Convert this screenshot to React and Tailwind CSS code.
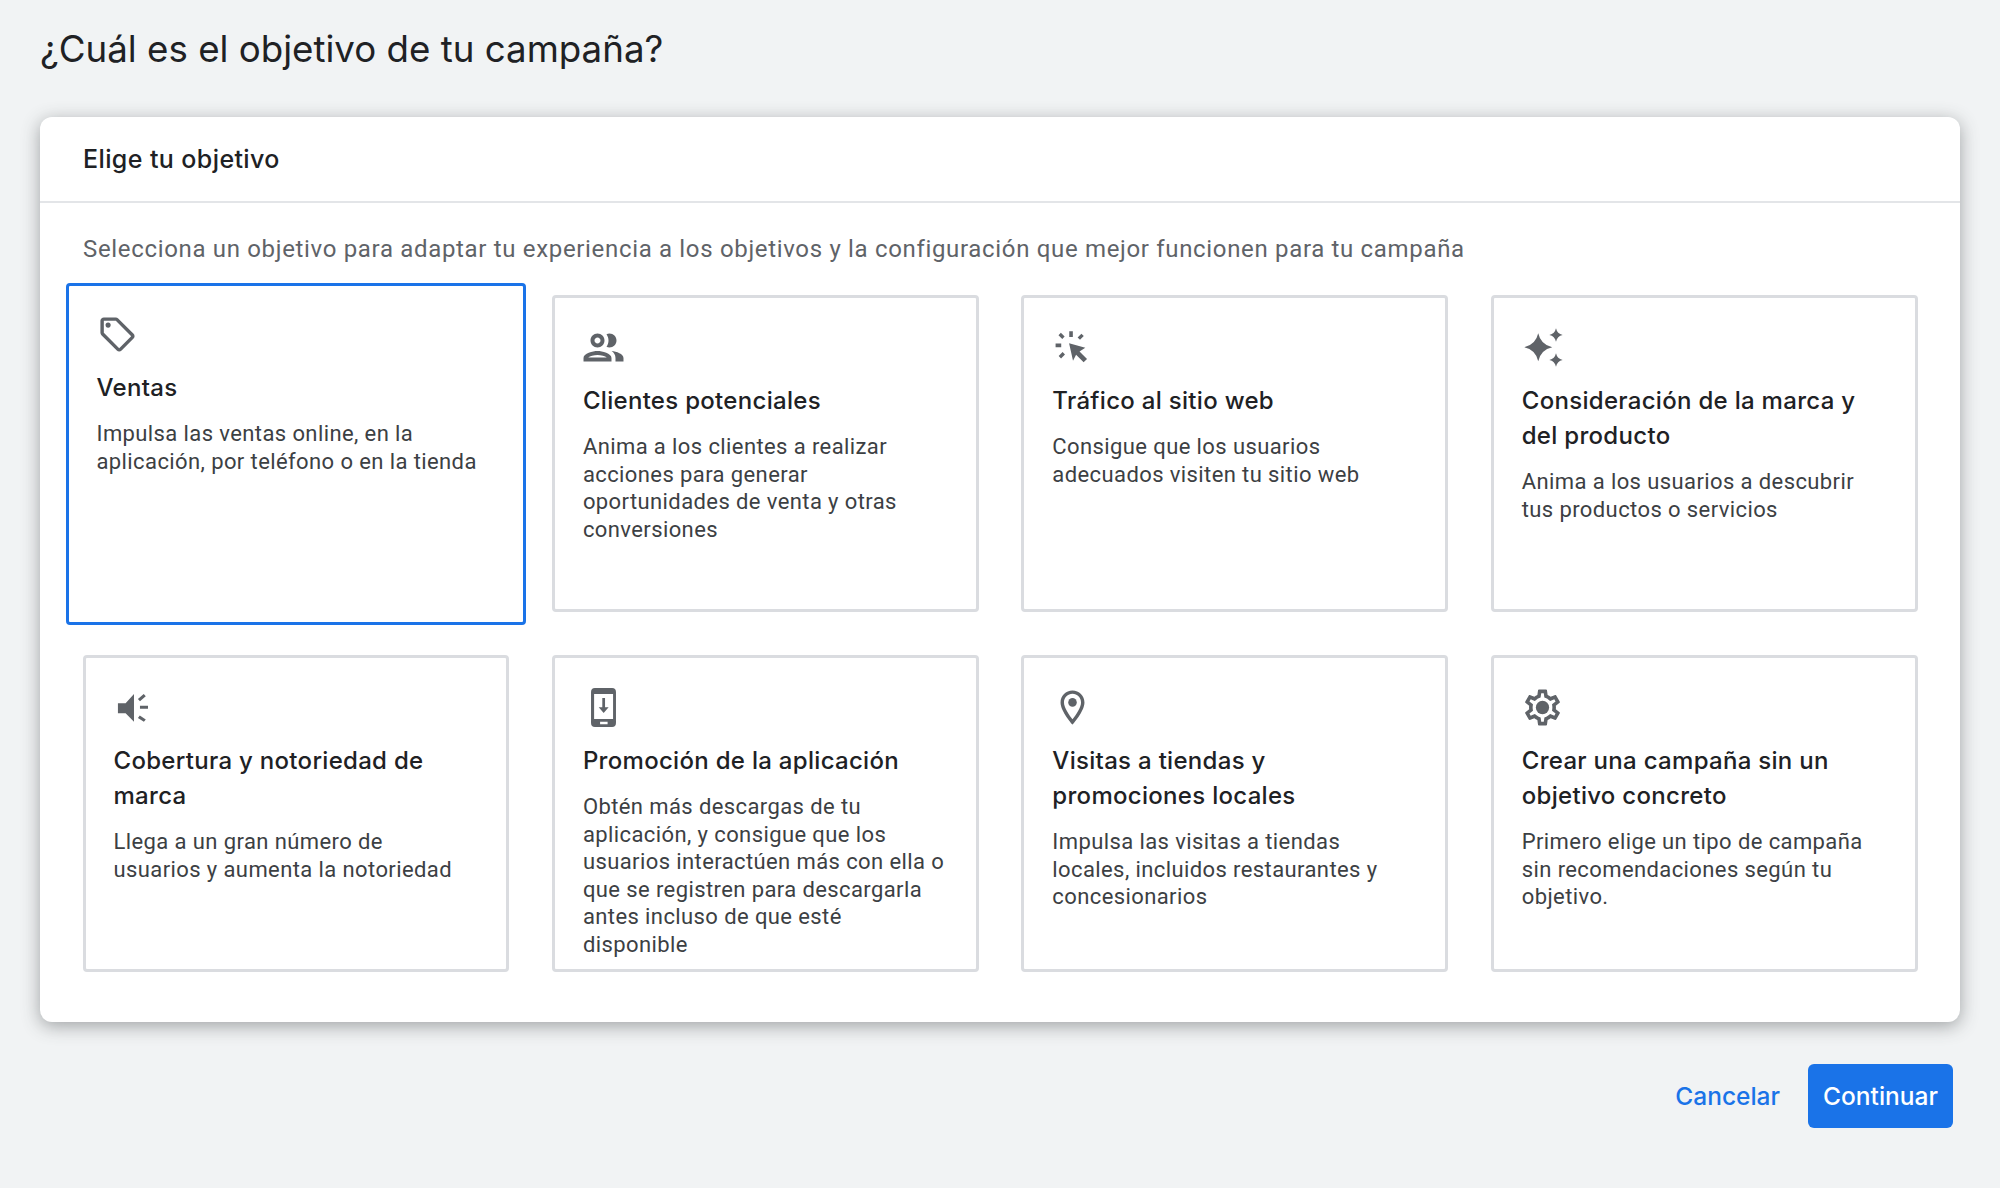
const Icon = ({ children }) => (
  <svg viewBox="0 0 24 24" className="w-[41px] h-[41px] fill-[#5f6368] block shrink-0">{children}</svg>
);

const star = (cx, cy, r) => {
  const k = 0.18 * r;
  return `M${cx} ${cy - r}Q${cx + k} ${cy - k} ${cx + r} ${cy}Q${cx + k} ${cy + k} ${cx} ${cy + r}Q${cx - k} ${cy + k} ${cx - r} ${cy}Q${cx - k} ${cy - k} ${cx} ${cy - r}Z`;
};

const icons = {
  tag: (
    <Icon>
      <path d="M21.41 11.58l-9-9C12.05 2.22 11.55 2 11 2H4c-1.1 0-2 .9-2 2v7c0 .55.22 1.05.59 1.42l9 9c.36.36.86.58 1.41.58s1.05-.22 1.41-.59l7-7c.37-.36.59-.86.59-1.41s-.23-1.06-.59-1.42zM13 20.01L4 11V4h7v-.01l9 9-7 7.02z" />
      <circle cx="6.5" cy="6.5" r="1.5" />
    </Icon>
  ),
  group: (
    <Icon>
      <g transform="translate(12 12) scale(1.17) translate(-12 -12)">
        <path d="M9 13.75c-2.34 0-7 1.17-7 3.5V19h14v-1.75c0-2.33-4.66-3.5-7-3.5zM4.34 17c.84-.58 2.87-1.25 4.66-1.25s3.82.67 4.66 1.25H4.34zM9 12c1.93 0 3.5-1.57 3.5-3.5S10.93 5 9 5 5.5 6.57 5.5 8.5 7.07 12 9 12zm0-5c.83 0 1.5.67 1.5 1.5S9.83 10 9 10s-1.5-.67-1.5-1.5S8.17 7 9 7zm7.04 6.81c1.16.84 1.96 1.96 1.96 3.44V19h4v-1.75c0-2.02-3.5-3.17-5.96-3.44zM15 12c1.93 0 3.5-1.57 3.5-3.5S16.93 5 15 5c-.54 0-1.04.13-1.5.35.63.89 1 1.98 1 3.15s-.37 2.26-1 3.15c.46.22.96.35 1.5.35z" />
      </g>
    </Icon>
  ),
  click: (
    <Icon>
      <path d="M10 9.5L19.5 12.2L16.1 14.3L20.5 18.7L18.5 20.7L14.1 16.3L12.3 19.7Z" />
      <path d="M10.1 2.5h2.1v3.4h-2.1zM2.1 9.7h3.3v2.1H2.1zM3.8 4.8l1.4-1.4 2.2 2.2L6 7zM15 6.1l2.2-2.2 1.4 1.4-2.2 2.2zM3.9 17l2.3-2.3 1.4 1.4-2.3 2.3z" />
    </Icon>
  ),
  sparkle: (
    <Icon>
      <path d={star(9.5, 11.9, 8.2)} />
      <path d={star(19.9, 4.7, 3.9)} />
      <path d={star(19.9, 19.3, 3.9)} />
    </Icon>
  ),
  megaphone: (
    <Icon>
      <path d="M2.3 9.5H6.8L11.7 4.1V20.3L6.8 15.4H2.3Z" />
      <path d="M15.2 11h4.7v1.8h-4.7zM14 7l3.4-2.9 1.2 1.3-3.4 2.9zM14 18.1l1.1-1.4 3.5 2.3-1.1 1.4z" />
    </Icon>
  ),
  phone: (
    <Icon>
      <path
        fillRule="evenodd"
        d="M7 .6h10a2.3 2.3 0 0 1 2.3 2.3v18.2a2.3 2.3 0 0 1-2.3 2.3H7a2.3 2.3 0 0 1-2.3-2.3V2.9A2.3 2.3 0 0 1 7 .6zM6.5 4.1v14.6h11.1V4.1zM10 20.3v1.5h4.4v-1.5z"
      />
      <path d="M11.3 6.4h1.6v5.4h2.1L12.1 15.2L9.2 11.8h2.1z" />
    </Icon>
  ),
  pin: (
    <Icon>
      <path d="M12 2C8.13 2 5 5.13 5 9c0 5.25 7 13 7 13s7-7.75 7-13c0-3.87-3.13-7-7-7zM7 9c0-2.76 2.24-5 5-5s5 2.24 5 5c0 2.88-2.88 7.19-5 9.88C9.92 16.21 7 11.85 7 9z" />
      <circle cx="12" cy="9" r="2.5" />
    </Icon>
  ),
  gear: (
    <Icon>
      <g transform="translate(12 12) scale(1.05) translate(-12 -12)">
        <path d="M19.43 12.98c.04-.32.07-.64.07-.98 0-.34-.03-.66-.07-.98l2.11-1.65c.19-.15.24-.42.12-.64l-2-3.46c-.09-.16-.26-.25-.44-.25-.06 0-.12.01-.17.03l-2.49 1c-.52-.4-1.08-.73-1.69-.98l-.38-2.65C14.46 2.18 14.25 2 14 2h-4c-.25 0-.46.18-.49.42l-.38 2.65c-.61.25-1.17.59-1.69.98l-2.49-1c-.06-.02-.12-.03-.18-.03-.17 0-.34.09-.43.25l-2 3.46c-.13.22-.07.49.12.64l2.11 1.65c-.04.32-.07.65-.07.98 0 .33.03.66.07.98l-2.11 1.65c-.19.15-.24.42-.12.64l2 3.46c.09.16.26.25.44.25.06 0 .12-.01.17-.03l2.49-1c.52.4 1.08.73 1.69.98l.38 2.65c.03.24.24.42.49.42h4c.25 0 .46-.18.49-.42l.38-2.65c.61-.25 1.17-.59 1.69-.98l2.49 1c.06.02.12.03.18.03.17 0 .34-.09.43-.25l2-3.46c.12-.22.07-.49-.12-.64l-2.11-1.65zm-1.98-1.71c.04.31.05.52.05.73 0 .21-.02.43-.05.73l-.14 1.13.89.7 1.08.84-.7 1.21-1.27-.51-1.04-.42-.9.68c-.43.32-.84.56-1.25.73l-1.06.43-.16 1.13-.2 1.35h-1.4l-.19-1.35-.16-1.13-1.06-.43c-.43-.18-.83-.41-1.23-.71l-.91-.7-1.06.43-1.27.51-.7-1.21 1.08-.84.89-.7-.14-1.13c-.03-.31-.05-.54-.05-.74s.02-.43.05-.73l.14-1.13-.89-.7-1.08-.84.7-1.21 1.27.51 1.04.42.9-.68c.43-.32.84-.56 1.25-.73l1.06-.43.16-1.13.2-1.35h1.39l.19 1.35.16 1.13 1.06.43c.43.18.83.41 1.23.71l.91.7 1.06-.43 1.27-.51.7 1.21-1.07.85-.89.7.14 1.13z" />
        <circle cx="12" cy="12" r="3.7" />
      </g>
    </Icon>
  ),
};

const cards = [
  { icon: "tag", title: "Ventas", desc: "Impulsa las ventas online, en la\naplicación, por teléfono o en la tienda", selected: true },
  { icon: "group", title: "Clientes potenciales", desc: "Anima a los clientes a realizar\nacciones para generar\noportunidades de venta y otras\nconversiones" },
  { icon: "click", title: "Tráfico al sitio web", desc: "Consigue que los usuarios\nadecuados visiten tu sitio web" },
  { icon: "sparkle", title: "Consideración de la marca y\ndel producto", desc: "Anima a los usuarios a descubrir\ntus productos o servicios" },
  { icon: "megaphone", title: "Cobertura y notoriedad de\nmarca", desc: "Llega a un gran número de\nusuarios y aumenta la notoriedad" },
  { icon: "phone", title: "Promoción de la aplicación", desc: "Obtén más descargas de tu\naplicación, y consigue que los\nusuarios interactúen más con ella o\nque se registren para descargarla\nantes incluso de que esté\ndisponible" },
  { icon: "pin", title: "Visitas a tiendas y\npromociones locales", desc: "Impulsa las visitas a tiendas\nlocales, incluidos restaurantes y\nconcesionarios" },
  { icon: "gear", title: "Crear una campaña sin un\nobjetivo concreto", desc: "Primero elige un tipo de campaña\nsin recomendaciones según tu\nobjetivo." },
];

const sans = "font-['Inter',sans-serif]";

function Card({ icon, title, desc, selected }) {
  return (
    <div
      className={
        selected
          ? "-mx-[17px] -mt-[12px] -mb-[13px] border-[3px] border-[#1a73e8] rounded-[4px] bg-white pl-[28px] pr-[10px] pt-[28px]"
          : "border-[3px] border-[#dadce0] rounded-[4px] bg-white pl-[28px] pr-[10px] pt-[29px]"
      }
    >
      {icons[icon]}
      <h3 className={`${sans} mt-[15px] text-[24px] leading-[35px] font-medium text-[#202124] tracking-[0.3px] whitespace-pre-line`}>{title}</h3>
      <p className="mt-[15px] font-['Roboto',sans-serif] text-[22px] leading-[27.5px] tracking-[0.4px] text-[#3c4043] whitespace-pre-line">{desc}</p>
    </div>
  );
}

export default function App() {
  return (
    <div className="min-h-[1188px] bg-[#f1f3f4] px-[40px] pt-[26px]">
      <h1 className={`${sans} text-[36.7px] leading-[46px] font-normal text-[#202124] mb-[45px]`}>¿Cuál es el objetivo de tu campaña?</h1>
      <div className="bg-white rounded-[12px] shadow-[0_4px_18px_rgba(60,64,67,0.45)] pb-[50px]">
        <div className="h-[86px] border-b-2 border-[#e3e5e8] pl-[43px] pt-[1px] flex items-center">
          <h2 className={`${sans} text-[25px] tracking-[0.4px] font-medium text-[#202124]`}>Elige tu objetivo</h2>
        </div>
        <p className="mt-[30px] pl-[43px] font-['Roboto',sans-serif] text-[24px] leading-[32px] tracking-[0.67px] text-[#5f6368]">
          Selecciona un objetivo para adaptar tu experiencia a los objetivos y la configuración que mejor funcionen para tu campaña
        </p>
        <div className="mt-[30px] px-[42.5px] grid grid-cols-4 grid-rows-[317px_317px] gap-x-[42.67px] gap-y-[43px]">
          {cards.map((c) => (
            <Card key={c.title} {...c} />
          ))}
        </div>
      </div>
      <div className="mt-[42px] flex justify-end items-center pr-[7px] gap-[28px]">
        <button className={`${sans} text-[24.5px] font-medium text-[#1a73e8]`}>Cancelar</button>
        <button className={`${sans} w-[145px] h-[64px] rounded-[6px] bg-[#1a73e8] text-[24.5px] font-medium text-white`}>Continuar</button>
      </div>
    </div>
  );
}
